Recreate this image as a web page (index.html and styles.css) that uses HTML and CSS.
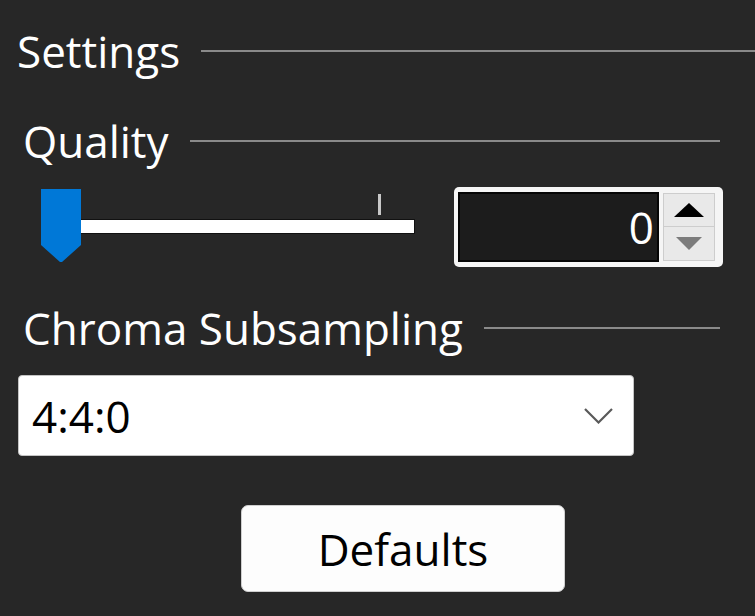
FILE: index.html
```html
<!DOCTYPE html>
<html lang="en">
<head>
<meta charset="utf-8">
<title>Settings</title>
<link rel="stylesheet" href="styles.css">
</head>
<body>
<div class="panel">
  <div class="header header-top">
    <span class="title">Settings</span>
    <span class="rule rule-full"></span>
  </div>
  <div class="group">
    <div class="header header-quality">
      <span class="title">Quality</span>
      <span class="rule"></span>
    </div>
    <div class="quality-row">
      <div class="slider">
        <svg class="thumb" width="40" height="73" viewBox="0 0 40 73">
          <polygon points="0,0 40,0 40,56 21,73 19,73 0,56" fill="#0078d7"/>
        </svg>
        <div class="rail">
          <div class="tick"></div>
          <div class="track"></div>
        </div>
      </div>
      <div class="spin">
        <div class="spin-field">0</div>
        <div class="spin-buttons">
          <div class="spin-btn">
            <svg width="30" height="14" viewBox="0 0 30 14"><polygon points="15,0 30,14 0,14" fill="#000"/></svg>
          </div>
          <div class="spin-btn">
            <svg width="26" height="13" viewBox="0 0 26 13"><polygon points="0,0 26,0 13,13" fill="#7c7c7c"/></svg>
          </div>
        </div>
      </div>
    </div>
    <div class="header header-chroma">
      <span class="title">Chroma Subsampling</span>
      <span class="rule"></span>
    </div>
    <div class="combo">
      <span class="combo-value">4:4:0</span>
      <svg class="chevron" width="29" height="16" viewBox="0 0 29 16">
        <polyline points="1,1 14.5,14.5 28,1" fill="none" stroke="#5a5a5a" stroke-width="2.2"/>
      </svg>
    </div>
    <div class="actions">
      <button class="btn" type="button">Defaults</button>
    </div>
  </div>
</div>
</body>
</html>
```
FILE: styles.css
```css
html, body {
  margin: 0;
  padding: 0;
  background: #272727;
}

body {
  width: 755px;
  height: 616px;
  overflow: hidden;
  font-family: "Open Sans", "Noto Sans", sans-serif;
  font-size: 44px;
  color: #ffffff;
}

.panel {
  padding-top: 21px;
}

.header {
  display: flex;
  align-items: center;
  height: 60px;
  line-height: 60px;
}

.title {
  white-space: nowrap;
}

.rule {
  flex: 1;
  height: 2px;
  background: #8a8a8a;
  margin-left: 21px;
  margin-right: 35px;
}

.header-top {
  padding-left: 17px;
}

.rule-full {
  margin-right: 0;
}

.group {
  padding-left: 18px;
  margin-top: 30px;
}

.header-quality,
.header-chroma {
  padding-left: 5px;
}

.quality-row {
  display: flex;
  align-items: flex-start;
  margin-top: 16px;
}

.slider {
  display: flex;
  align-items: flex-start;
  margin-left: 23px;
  margin-top: 2px;
}

.thumb {
  display: block;
  position: relative;
  z-index: 1;
}

.rail {
  display: flex;
  flex-direction: column;
  width: 333px;
  padding-top: 5px;
}

.tick {
  align-self: flex-end;
  width: 3px;
  height: 21px;
  margin-right: 33px;
  background: #c8c8c8;
}

.track {
  height: 13px;
  margin-top: 5px;
  background: #ffffff;
  box-shadow: 0 0 0 1px #111111;
}

.spin {
  display: flex;
  gap: 4px;
  margin-left: 40px;
  padding: 5px 8px 5px 4px;
  background: #f5f5f5;
  border-radius: 5px;
}

.spin-field {
  box-sizing: border-box;
  width: 201px;
  height: 70px;
  background: #1c1c1c;
  border: 2px solid #050505;
  text-align: right;
  line-height: 62px;
  padding-right: 3px;
  padding-top: 2px;
  color: #ffffff;
}

.spin-buttons {
  display: flex;
  flex-direction: column;
  width: 52px;
  padding-top: 1px;
}

.spin-btn {
  box-sizing: border-box;
  height: 34px;
  display: flex;
  align-items: center;
  justify-content: center;
  background: #e9e9e9;
  border: 1px solid #cdcdcd;
}

.spin-btn + .spin-btn {
  border-top: none;
}

.spin-btn svg {
  display: block;
}

.header-chroma {
  margin-top: 31px;
}

.combo {
  box-sizing: border-box;
  width: 616px;
  height: 81px;
  margin-top: 17px;
  display: flex;
  align-items: center;
  justify-content: space-between;
  padding: 0 20px 0 13px;
  background: #ffffff;
  border: 1px solid #c4c4c4;
  border-radius: 4px;
  color: #000000;
  line-height: 60px;
}

.chevron {
  display: block;
}

.actions {
  display: flex;
  margin-top: 49px;
  padding-left: 223px;
}

.btn {
  box-sizing: border-box;
  width: 324px;
  height: 87px;
  font-family: inherit;
  font-size: 44px;
  color: #000000;
  background: #fdfdfd;
  border: 1px solid #cfcfcf;
  border-radius: 7px;
  padding: 0;
}
```
